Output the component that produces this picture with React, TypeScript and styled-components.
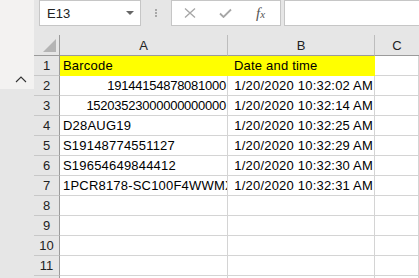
import React from "react";
import styled, { createGlobalStyle } from "styled-components";

const GlobalStyle = createGlobalStyle`
  html, body {
    margin: 0;
    padding: 0;
    overflow: hidden;
    background: #e6e6e6;
  }
  * { box-sizing: border-box; }
`;

const FONT = `"Liberation Sans", Arial, sans-serif`;

const Page = styled.div`
  display: flex;
  width: 419px;
  height: 278px;
  overflow: hidden;
  font-family: ${FONT};
  background: #e6e6e6;
`;

const LeftStrip = styled.div`
  width: 34px;
  flex: none;
  display: flex;
  flex-direction: column;
`;

const RibbonPanel = styled.div`
  height: 89px;
  background: #f3f2f1;
  display: flex;
  align-items: flex-end;
  justify-content: center;
  padding: 0 0 6px 7px;
`;

const Main = styled.div`
  flex: 1;
  min-width: 0;
  display: flex;
  flex-direction: column;
`;

const FormulaBar = styled.div`
  height: 35px;
  flex: none;
  display: flex;
  align-items: flex-start;
  padding-left: 5px;
`;

const NameBox = styled.div`
  width: 102px;
  height: 26px;
  background: #fff;
  border: 1px solid #c6c6c6;
  display: flex;
  align-items: center;
  justify-content: space-between;
  padding: 0 6px 0 7px;
  font-size: 13px;
  color: #222;
`;

const Dots = styled.div`
  width: 30px;
  height: 26px;
  display: flex;
  flex-direction: column;
  align-items: center;
  justify-content: center;
  gap: 1px;
  & > span {
    width: 2px;
    height: 2px;
    background: #a8a8a8;
  }
`;

const FxButtons = styled.div`
  width: 110px;
  height: 26px;
  background: #fff;
  border: 1px solid #c6c6c6;
  display: flex;
  align-items: center;
  padding-left: 12px;
  gap: 23px;
`;

const FxText = styled.span`
  font-family: "Liberation Serif", "Times New Roman", serif;
  font-style: italic;
  font-size: 15px;
  color: #555;
  margin-left: 1px;
  & > small {
    font-size: 11px;
  }
`;

const FormulaInput = styled.div`
  flex: 1;
  height: 26px;
  margin-left: 3px;
  background: #fff;
  border: 1px solid #c6c6c6;
  border-right: none;
`;

const Grid = styled.div`
  display: grid;
  grid-template-columns: 26px 168px 147px 1fr;
  grid-auto-rows: 20px;
  grid-template-rows: 21px;
  background: #fff;
`;

const Corner = styled.div`
  background: #e6e6e6;
  border-right: 1px solid #9b9b9b;
  border-bottom: 1px solid #9b9b9b;
  position: relative;
  &::after {
    content: "";
    position: absolute;
    right: 3px;
    bottom: 3px;
    width: 0;
    height: 0;
    border-left: 13px solid transparent;
    border-bottom: 13px solid #b4b4b4;
  }
`;

const ColHead = styled.div<{ $last?: boolean }>`
  background: #e6e6e6;
  border-right: ${(p) => (p.$last ? "none" : "1px solid #bdbdbd")};
  border-bottom: 1px solid #9b9b9b;
  display: flex;
  align-items: flex-end;
  justify-content: center;
  padding-bottom: 2px;
  font-size: 13px;
  color: #222;
`;

const RowHead = styled.div`
  background: #e6e6e6;
  border-right: 1px solid #9b9b9b;
  border-bottom: 1px solid #c8c8c8;
  display: flex;
  align-items: flex-end;
  justify-content: center;
  padding-bottom: 2px;
  font-size: 13px;
  color: #222;
`;

const Cell = styled.div<{ $align?: "left" | "right"; $fill?: string; $indent?: number; $tight?: boolean }>`
  background: ${(p) => p.$fill || "#fff"};
  border-right: 1px solid ${(p) => p.$fill || "#d4d4d4"};
  border-bottom: 1px solid ${(p) => p.$fill || "#d4d4d4"};
  display: flex;
  align-items: flex-end;
  justify-content: ${(p) => (p.$align === "right" ? "flex-end" : "flex-start")};
  padding: 0 1px 2px ${(p) => p.$indent ?? 3}px;
  font-size: 13px;
  color: #000;
  white-space: nowrap;
  overflow: hidden;
  letter-spacing: ${(p) => (p.$tight ? "-0.25px" : "0.2px")};
`;

const rows: [string, string][] = [
  ["19144154878081000", "1/20/2020 10:32:02 AM"],
  ["15203523000000000000", "1/20/2020 10:32:14 AM"],
  ["D28AUG19", "1/20/2020 10:32:25 AM"],
  ["S19148774551127", "1/20/2020 10:32:29 AM"],
  ["S19654649844412", "1/20/2020 10:32:30 AM"],
  ["1PCR8178-SC100F4WWMXS", "1/20/2020 10:32:31 AM"],
];

const isNumber = (v: string) => /^\d+$/.test(v);

export default function App() {
  return (
    <>
      <GlobalStyle />
      <Page>
        <LeftStrip>
          <RibbonPanel>
            <svg width="12" height="7" viewBox="0 0 12 7">
              <polyline points="1,6 6,1 11,6" fill="none" stroke="#333" strokeWidth="1.1" />
            </svg>
          </RibbonPanel>
        </LeftStrip>
        <Main>
          <FormulaBar>
            <NameBox>
              <span>E13</span>
              <svg width="8" height="4" viewBox="0 0 8 4">
                <polygon points="0,0 8,0 4,4" fill="#666" />
              </svg>
            </NameBox>
            <Dots>
              <span />
              <span />
              <span />
            </Dots>
            <FxButtons>
              <svg width="12" height="12" viewBox="0 0 12 12">
                <path d="M1 1.5 L11 10.5 M11 1.5 L1 10.5" stroke="#a6a6a6" strokeWidth="1.3" fill="none" />
              </svg>
              <svg width="13" height="10" viewBox="0 0 13 10">
                <path d="M1 5.5 L4.5 9 L12 1.5" stroke="#a6a6a6" strokeWidth="1.8" fill="none" />
              </svg>
              <FxText>
                f<small>x</small>
              </FxText>
            </FxButtons>
            <FormulaInput />
          </FormulaBar>
          <Grid>
            <Corner />
            <ColHead>A</ColHead>
            <ColHead>B</ColHead>
            <ColHead $last>C</ColHead>

            <RowHead>1</RowHead>
            <Cell $fill="#ffff00">Barcode</Cell>
            <Cell $fill="#ffff00" $indent={6}>Date and time</Cell>
            <Cell />

            {rows.map(([a, b], i) => (
              <React.Fragment key={i}>
                <RowHead>{i + 2}</RowHead>
                <Cell $align={isNumber(a) ? "right" : "left"} $tight={isNumber(a)}>
                  {a}
                </Cell>
                <Cell $align="right">{b}</Cell>
                <Cell />
              </React.Fragment>
            ))}

            {[8, 9, 10, 11].map((n) => (
              <React.Fragment key={n}>
                <RowHead>{n}</RowHead>
                <Cell />
                <Cell />
                <Cell />
              </React.Fragment>
            ))}
            <RowHead />
            <Cell />
            <Cell />
            <Cell />
          </Grid>
        </Main>
      </Page>
    </>
  );
}
